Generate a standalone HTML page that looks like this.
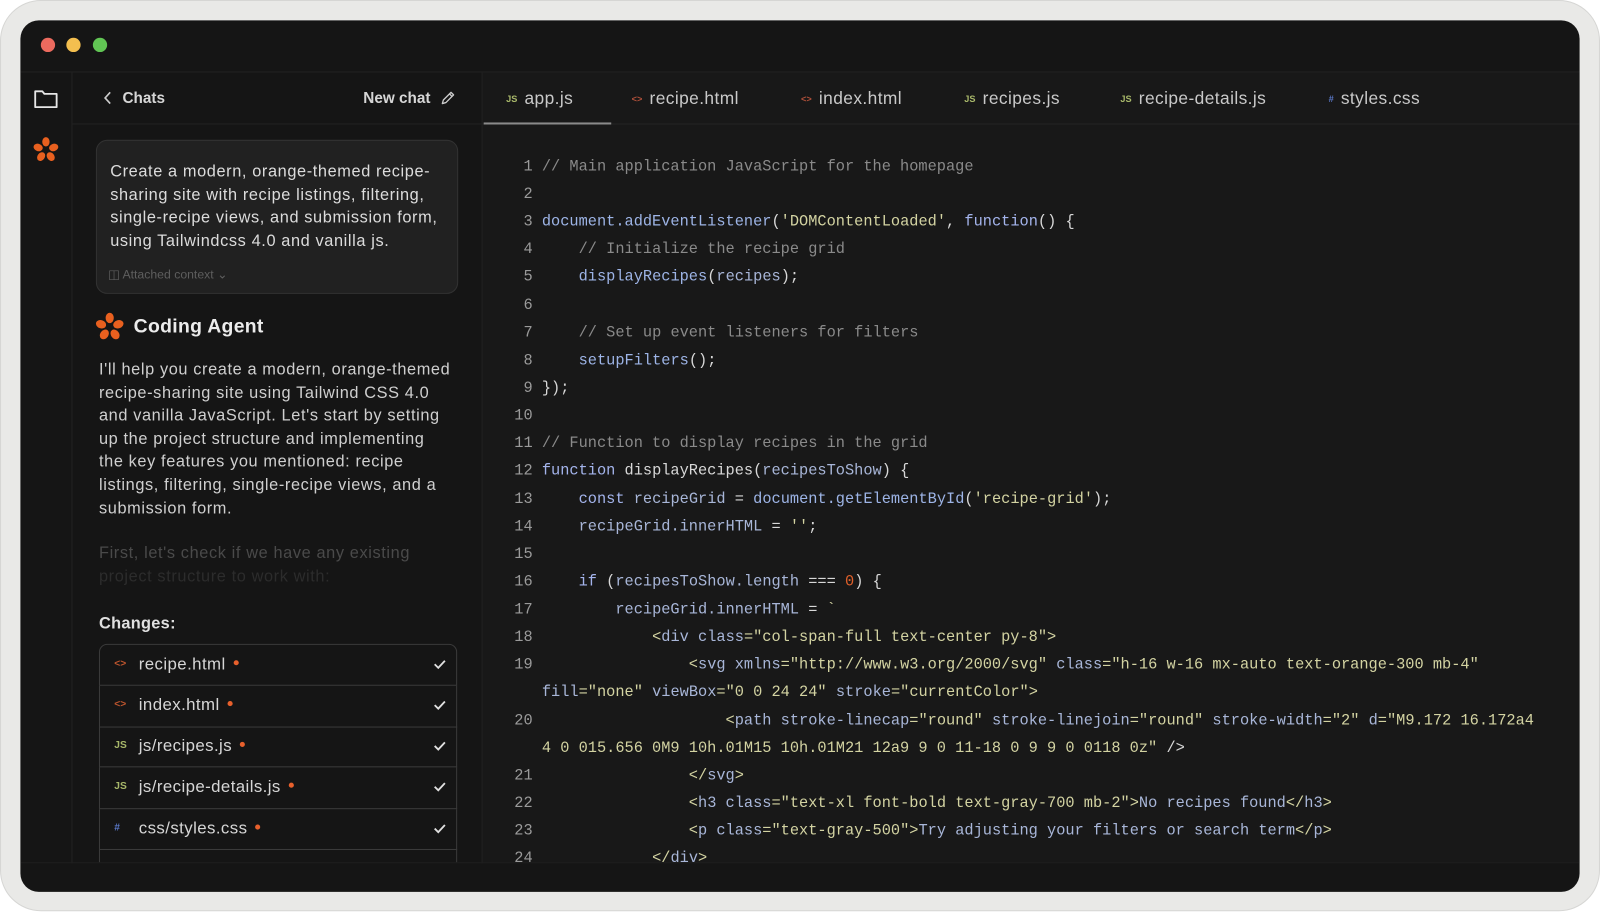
<!DOCTYPE html>
<html><head><meta charset="utf-8">
<style>
*{margin:0;padding:0;box-sizing:border-box}
html,body{width:1600px;height:912px;overflow:hidden;background:#fff;font-family:"Liberation Sans",sans-serif}
#s{position:absolute;left:0;top:0;width:1568px;height:894px;transform:scale(1.020408);transform-origin:0 0}
.frame{position:absolute;left:0;top:0;width:1568px;height:893px;border-radius:40px;background:#e9e9e7;border:1px solid #d6d6d4}
.win{position:absolute;left:20px;top:20px;width:1528px;height:854px;border-radius:18px;background:#151515;overflow:hidden}
.a{position:absolute;white-space:nowrap}
.dot{position:absolute;width:14px;height:14px;border-radius:50%;top:17px}
.ln{position:absolute;width:40px;text-align:right;left:462px;color:#9a9a9a;font-family:"Liberation Mono",monospace;font-size:15px}
.cl{position:absolute;left:511px;font-family:"Liberation Mono",monospace;font-size:15px;color:#d8d8d8;white-space:pre}
.c{color:#8a8a8a}.b{color:#9db4e6}.s{color:#d3d3a2}.k{color:#a4b4ec}.t{color:#a8b6d8}.o{color:#e0602a}
.tab{position:absolute;top:67px;font-size:17px;color:#c9c9c9;letter-spacing:0.4px}
.ic{font-size:9px;font-weight:bold;margin-right:7px;vertical-align:2px;letter-spacing:0}
.row{position:absolute;left:77px;width:351px;height:41px;border:1px solid #3a3a3a;border-top:none}
.row .n{position:absolute;left:38px;top:10px;font-size:16.5px;color:#d6d6d6;letter-spacing:0.4px}
.row .i{position:absolute;left:14px;top:13px;font-size:10px;font-weight:bold}
.row .d{display:inline-block;width:5px;height:5px;border-radius:50%;background:#e8602c;margin-left:8px;vertical-align:4px}
.row svg{position:absolute;right:10px;top:14px}
.sp{letter-spacing:0.6px}
</style></head><body>
<div id="s">
<div class="frame"></div>
<div class="win">
  <div class="dot" style="left:20px;background:#ec6a5e"></div>
  <div class="dot" style="left:45px;background:#f4bf4f"></div>
  <div class="dot" style="left:71px;background:#61c554"></div>
  <div style="position:absolute;left:0;top:50px;width:1528px;height:1px;background:#232323"></div>
  <div style="position:absolute;left:50px;top:51px;width:1px;height:775px;background:#232323"></div>
  <svg style="position:absolute;left:13px;top:67px" width="24" height="20" viewBox="0 0 24 20"><path d="M1.5 2.5h7l2 2.5h12v13h-21z" fill="none" stroke="#e6e6e6" stroke-width="1.8" stroke-linejoin="round"/></svg>
  <svg style="position:absolute;left:12px;top:114px" width="26" height="26" viewBox="-13 -13 26 26"><g fill="#e8601f"><ellipse cx="0" cy="-8" rx="3.6" ry="4.6"/><ellipse cx="0" cy="-8" rx="3.6" ry="4.6" transform="rotate(72)"/><ellipse cx="0" cy="-8" rx="3.6" ry="4.6" transform="rotate(144)"/><ellipse cx="0" cy="-8" rx="3.6" ry="4.6" transform="rotate(216)"/><ellipse cx="0" cy="-8" rx="3.6" ry="4.6" transform="rotate(288)"/></g></svg>
  <div style="position:absolute;left:452px;top:51px;width:1px;height:775px;background:#232323"></div>
  <div style="position:absolute;left:51px;top:101px;width:401px;height:1px;background:#222"></div>
  <svg style="position:absolute;left:81px;top:69px" width="10" height="14" viewBox="0 0 10 14"><path d="M7 1.5L2 7l5 5.5" fill="none" stroke="#ccc" stroke-width="1.6"/></svg>
  <div class="a" style="left:100px;top:68px;font-size:15px;font-weight:bold;color:#d6d6d6">Chats</div>
  <div class="a" style="left:336px;top:68px;font-size:15px;font-weight:bold;color:#d6d6d6">New chat</div>
  <svg style="position:absolute;left:411px;top:68px" width="16" height="16" viewBox="0 0 16 16"><path d="M2.5 13.5l1-3.5 7.5-7.5 2.5 2.5-7.5 7.5zM9.5 4l2.5 2.5" fill="none" stroke="#ccc" stroke-width="1.3" stroke-linejoin="round"/></svg>
  <div style="position:absolute;left:74px;top:117px;width:355px;height:151px;border-radius:11px;background:#212121;border:1px solid #323232"></div>
  <div class="a sp" style="left:88px;top:138px;font-size:16px;line-height:22.7px;color:#dcdcdc">Create a modern, orange-themed recipe-<br>sharing site with recipe listings, filtering,<br>single-recipe views, and submission form,<br>using Tailwindcss 4.0 and vanilla js.</div>
  <div class="a" style="left:86px;top:242px;font-size:12px;color:#5e5e5e">&#9707; Attached context &#8964;</div>
  <svg style="position:absolute;left:73px;top:286px" width="29" height="29" viewBox="-13 -13 26 26"><g fill="#e8601f"><ellipse cx="0" cy="-8" rx="3.6" ry="4.6"/><ellipse cx="0" cy="-8" rx="3.6" ry="4.6" transform="rotate(72)"/><ellipse cx="0" cy="-8" rx="3.6" ry="4.6" transform="rotate(144)"/><ellipse cx="0" cy="-8" rx="3.6" ry="4.6" transform="rotate(216)"/><ellipse cx="0" cy="-8" rx="3.6" ry="4.6" transform="rotate(288)"/></g></svg>
  <div class="a" style="left:111px;top:290px;font-size:19px;font-weight:bold;color:#ececec;letter-spacing:0.3px">Coding Agent</div>
  <div class="a sp" style="left:77px;top:332px;font-size:16px;line-height:22.6px;color:#cfcfcf">I'll help you create a modern, orange-themed<br>recipe-sharing site using Tailwind CSS 4.0<br>and vanilla JavaScript. Let's start by setting<br>up the project structure and implementing<br>the key features you mentioned: recipe<br>listings, filtering, single-recipe views, and a<br>submission form.</div>
  <div class="a sp" style="left:77px;top:512px;font-size:16px;line-height:22.6px;color:#4a4a4a">First, let's check if we have any existing<br><span style="color:#2c2c2c">project structure to work with:</span></div>
  <div class="a" style="left:77px;top:583px;font-size:16px;font-weight:bold;color:#e0e0e0;letter-spacing:0.3px">Changes:</div>
  <div class="row" style="top:611px;border-top:1px solid #3a3a3a;border-radius:8px 8px 0 0"><span class="i" style="color:#c0562e">&lt;&gt;</span><span class="n">recipe.html<span class="d"></span></span><svg width="12" height="10" viewBox="0 0 12 10"><path d="M1 5l3.5 3.5L11 1.5" fill="none" stroke="#e0e0e0" stroke-width="1.8"/></svg></div>
  <div class="row" style="top:652px"><span class="i" style="color:#c0562e">&lt;&gt;</span><span class="n">index.html<span class="d"></span></span><svg width="12" height="10" viewBox="0 0 12 10"><path d="M1 5l3.5 3.5L11 1.5" fill="none" stroke="#e0e0e0" stroke-width="1.8"/></svg></div>
  <div class="row" style="top:692px;height:40px"><span class="i" style="color:#a8b86a">JS</span><span class="n">js/recipes.js<span class="d"></span></span><svg width="12" height="10" viewBox="0 0 12 10"><path d="M1 5l3.5 3.5L11 1.5" fill="none" stroke="#e0e0e0" stroke-width="1.8"/></svg></div>
  <div class="row" style="top:732px;height:41px"><span class="i" style="color:#a8b86a">JS</span><span class="n">js/recipe-details.js<span class="d"></span></span><svg width="12" height="10" viewBox="0 0 12 10"><path d="M1 5l3.5 3.5L11 1.5" fill="none" stroke="#e0e0e0" stroke-width="1.8"/></svg></div>
  <div class="row" style="top:773px;height:40px"><span class="i" style="color:#5a78c8">#</span><span class="n">css/styles.css<span class="d"></span></span><svg width="12" height="10" viewBox="0 0 12 10"><path d="M1 5l3.5 3.5L11 1.5" fill="none" stroke="#e0e0e0" stroke-width="1.8"/></svg></div>
  <div class="row" style="top:813px;height:12px;border-bottom:none"></div>
  <div style="position:absolute;left:453px;top:51px;width:1075px;height:775px;background:#181818"></div>
  <div style="position:absolute;left:453px;top:101px;width:1075px;height:1px;background:#242424"></div>
  <div style="position:absolute;left:454px;top:100px;width:125px;height:2px;background:#8a8a8a"></div>
  <div class="tab" style="left:476px"><span class="ic" style="color:#a8b86a">JS</span>app.js</div>
  <div class="tab" style="left:599px"><span class="ic" style="color:#b0503a">&lt;&gt;</span>recipe.html</div>
  <div class="tab" style="left:765px"><span class="ic" style="color:#b0503a">&lt;&gt;</span>index.html</div>
  <div class="tab" style="left:925px"><span class="ic" style="color:#a8b86a">JS</span>recipes.js</div>
  <div class="tab" style="left:1078px"><span class="ic" style="color:#a8b86a">JS</span>recipe-details.js</div>
  <div class="tab" style="left:1282px"><span class="ic" style="color:#5a78c8">#</span>styles.css</div>
  <div style="position:absolute;left:453px;top:102px;width:1075px;height:724px;overflow:hidden">
  <div style="position:absolute;left:-453px;top:-100px;width:1528px;">
<div class="ln" style="top:133px">1</div><div class="cl" style="top:133px"><span class="c">// Main application JavaScript for the homepage</span></div>
<div class="ln" style="top:160px">2</div>
<div class="ln" style="top:187px">3</div><div class="cl" style="top:187px"><span class="b">document.addEventListener</span>(<span class="s">'DOMContentLoaded'</span>, <span class="k">function</span>() {</div>
<div class="ln" style="top:214px">4</div><div class="cl" style="top:214px">    <span class="c">// Initialize the recipe grid</span></div>
<div class="ln" style="top:241px">5</div><div class="cl" style="top:241px">    <span class="b">displayRecipes</span>(<span class="t">recipes</span>);</div>
<div class="ln" style="top:269px">6</div>
<div class="ln" style="top:296px">7</div><div class="cl" style="top:296px">    <span class="c">// Set up event listeners for filters</span></div>
<div class="ln" style="top:323px">8</div><div class="cl" style="top:323px">    <span class="b">setupFilters</span>();</div>
<div class="ln" style="top:350px">9</div><div class="cl" style="top:350px">});</div>
<div class="ln" style="top:377px">10</div>
<div class="ln" style="top:404px">11</div><div class="cl" style="top:404px"><span class="c">// Function to display recipes in the grid</span></div>
<div class="ln" style="top:431px">12</div><div class="cl" style="top:431px"><span class="k">function</span> displayRecipes(<span class="t">recipesToShow</span>) {</div>
<div class="ln" style="top:459px">13</div><div class="cl" style="top:459px">    <span class="k">const</span> <span class="t">recipeGrid</span> = <span class="b">document.getElementById</span>(<span class="s">'recipe-grid'</span>);</div>
<div class="ln" style="top:486px">14</div><div class="cl" style="top:486px">    <span class="t">recipeGrid.innerHTML</span> = <span class="s">''</span>;</div>
<div class="ln" style="top:513px">15</div>
<div class="ln" style="top:540px">16</div><div class="cl" style="top:540px">    <span class="k">if</span> (<span class="t">recipesToShow.length</span> === <span class="o">0</span>) {</div>
<div class="ln" style="top:567px">17</div><div class="cl" style="top:567px">        <span class="t">recipeGrid.innerHTML</span> = <span class="s">`</span></div>
<div class="ln" style="top:594px">18</div><div class="cl" style="top:594px">            <span class="s">&lt;</span><span class="t">div class</span><span class="s">="col-span-full text-center py-8"&gt;</span></div>
<div class="ln" style="top:621px">19</div><div class="cl" style="top:621px">                <span class="s">&lt;</span><span class="t">svg xmlns</span><span class="s">="http://www.w3.org/2000/svg"</span> <span class="t">class</span><span class="s">="h-16 w-16 mx-auto text-orange-300 mb-4"</span></div>
<div class="cl" style="top:648px"><span class="t">fill</span><span class="s">="none"</span> <span class="t">viewBox</span><span class="s">="0 0 24 24"</span> <span class="t">stroke</span><span class="s">="currentColor"&gt;</span></div>
<div class="ln" style="top:676px">20</div><div class="cl" style="top:676px">                    <span class="s">&lt;</span><span class="t">path stroke-linecap</span><span class="s">="round"</span> <span class="t">stroke-linejoin</span><span class="s">="round"</span> <span class="t">stroke-width</span><span class="s">="2"</span> <span class="t">d</span><span class="s">="M9.172 16.172a4</span></div>
<div class="cl" style="top:703px"><span class="s">4 0 015.656 0M9 10h.01M15 10h.01M21 12a9 9 0 11-18 0 9 9 0 0118 0z"</span> /&gt;</div>
<div class="ln" style="top:730px">21</div><div class="cl" style="top:730px">                <span class="s">&lt;/</span><span class="t">svg</span><span class="s">&gt;</span></div>
<div class="ln" style="top:757px">22</div><div class="cl" style="top:757px">                <span class="s">&lt;</span><span class="t">h3 class</span><span class="s">="text-xl font-bold text-gray-700 mb-2"&gt;</span><span class="t">No recipes found</span><span class="s">&lt;/</span><span class="t">h3</span><span class="s">&gt;</span></div>
<div class="ln" style="top:784px">23</div><div class="cl" style="top:784px">                <span class="s">&lt;</span><span class="t">p class</span><span class="s">="text-gray-500"&gt;</span><span class="t">Try adjusting your filters or search term</span><span class="s">&lt;/</span><span class="t">p</span><span class="s">&gt;</span></div>
<div class="ln" style="top:811px">24</div><div class="cl" style="top:811px">            <span class="s">&lt;/</span><span class="t">div</span><span class="s">&gt;</span></div>
  </div></div>
  <div style="position:absolute;left:0;top:825px;width:1528px;height:1px;background:#1f1f1f"></div>
</div>
</div>
</body></html>
